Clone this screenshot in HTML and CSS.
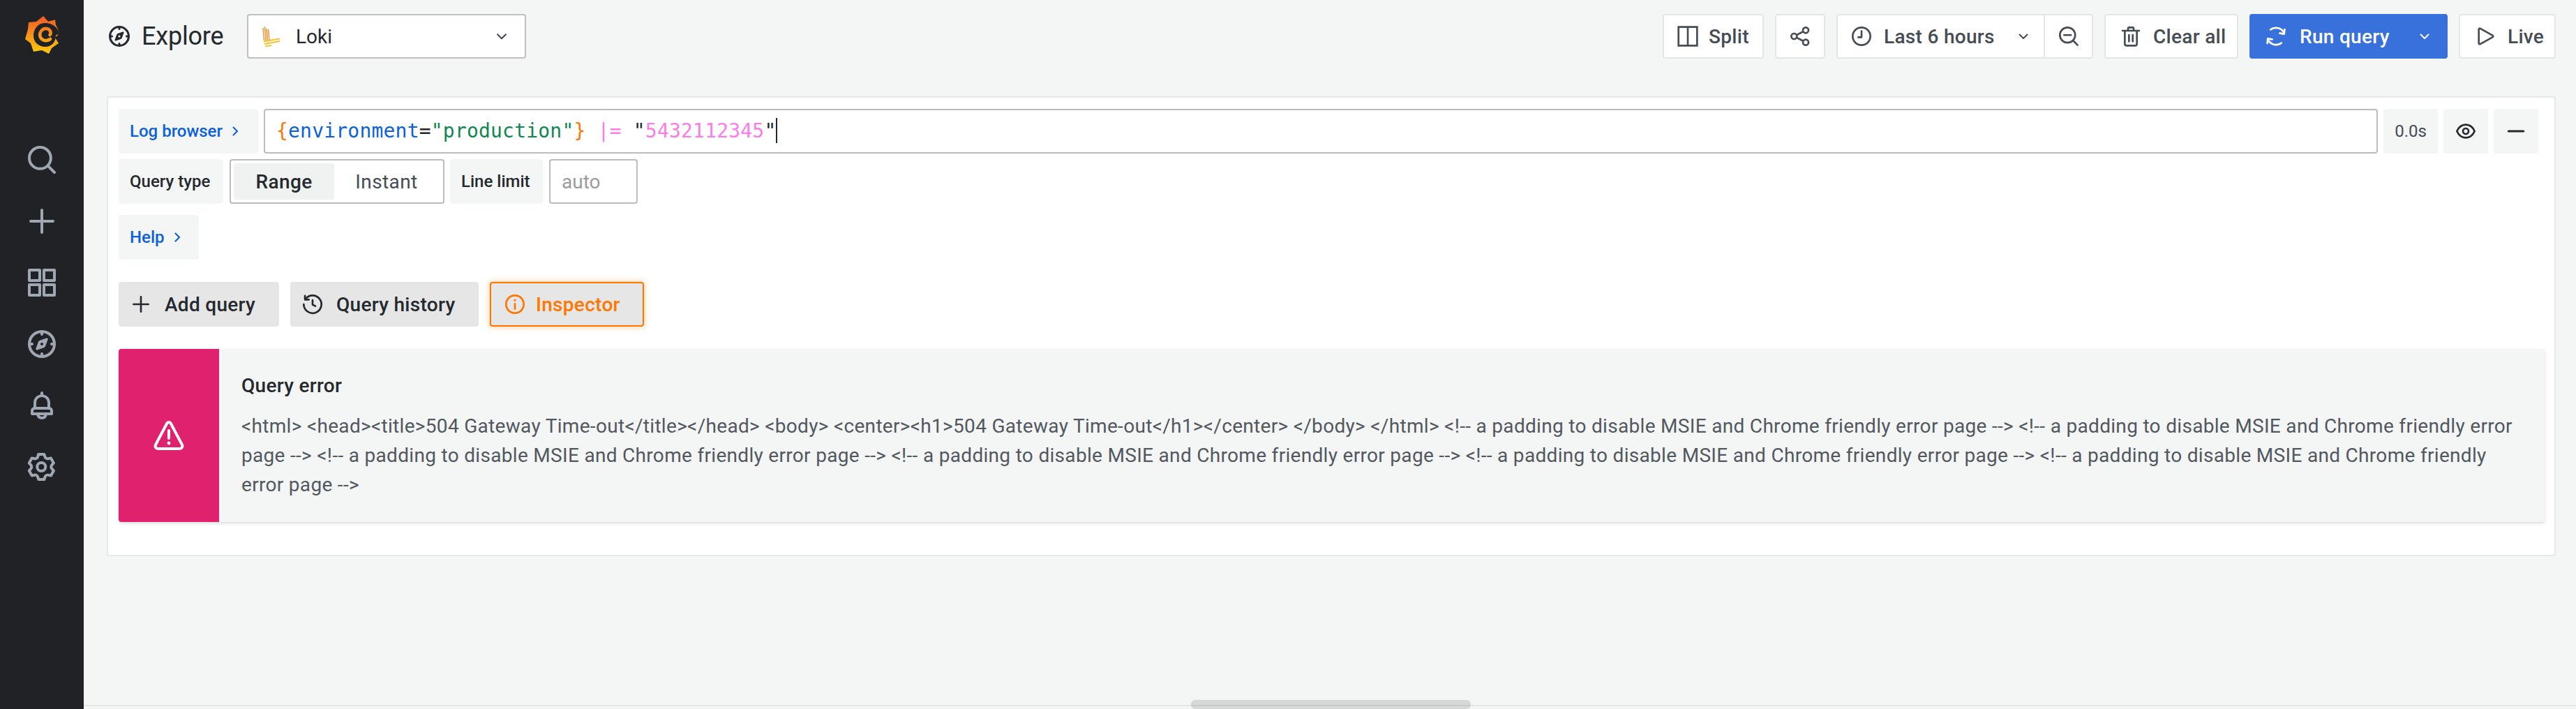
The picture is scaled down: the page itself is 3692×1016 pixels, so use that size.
FILE: index.html
```html
<!DOCTYPE html>
<html lang="en">
<head>
<meta charset="utf-8">
<title>Explore - Grafana</title>
<link rel="stylesheet" href="styles.css">
</head>
<body>
<svg class="defs" aria-hidden="true">
  <defs>
    <linearGradient id="logo-grad" gradientUnits="userSpaceOnUse" x1="0" y1="0" x2="0" y2="54">
      <stop offset="0" stop-color="#f05a28"/>
      <stop offset="1" stop-color="#fbca0a"/>
    </linearGradient>
    <symbol id="i-search" viewBox="0 0 24 24"><circle cx="10.7" cy="10.7" r="7.7" fill="none" stroke="currentColor" stroke-width="2"/><path d="M16.3 16.3 21 21" fill="none" stroke="currentColor" stroke-width="2" stroke-linecap="round"/></symbol>
    <symbol id="i-plus" viewBox="0 0 24 24"><path d="M12 4v16M4 12h16" fill="none" stroke="currentColor" stroke-width="2" stroke-linecap="round"/></symbol>
    <symbol id="i-apps" viewBox="0 0 24 24"><path d="M3 3h7.500v7.500H3zM13.500 3H21v7.500h-7.500zM3 13.500h7.500V21H3zM13.500 13.500H21V21h-7.500z" fill="none" stroke="currentColor" stroke-width="2" stroke-linejoin="round"/></symbol>
    <symbol id="i-compass" viewBox="0 0 24 24"><path fill="currentColor" d="M12,2A10,10,0,1,0,22,12,10,10,0,0,0,12,2Zm1,17.930V19a1,1,0,0,0-2,0v.93A8,8,0,0,1,4.070,13H5a1,1,0,0,0,0-2H4.070A8,8,0,0,1,11,4.070V5a1,1,0,0,0,2,0V4.070A8,8,0,0,1,19.930,11H19a1,1,0,0,0,0,2h.93A8,8,0,0,1,13,19.930Z"/><path fill="currentColor" fill-rule="evenodd" d="M16.100 7.900c-.2-.2-.5-.3-.8-.2l-4.700 1.700c-.6.200-1 .6-1.200 1.200l-1.700 4.700c-.1.300 0 .6.200.8s.5.300.8.200l4.700-1.700c.6-.2 1-.6 1.200-1.200l1.700-4.700c.1-.3 0-.6-.2-.8ZM12 13a1 1 0 1 1 0-2 1 1 0 0 1 0 2Z"/></symbol>
    <symbol id="i-bell" viewBox="0 0 24 24"><path fill="currentColor" d="M18,13.180V10a6,6,0,0,0-5-5.910V3a1,1,0,0,0-2,0V4.090A6,6,0,0,0,6,10v3.180A3,3,0,0,0,4,16v2a1,1,0,0,0,1,1H8.140a4,4,0,0,0,7.720,0H19a1,1,0,0,0,1-1V16A3,3,0,0,0,18,13.180ZM8,10a4,4,0,0,1,8,0v3H8ZM12,20a2,2,0,0,1-1.720-1h3.440A2,2,0,0,1,12,20Zm6-3H6V16a1,1,0,0,1,1-1H17a1,1,0,0,1,1,1Z"/></symbol>
    <symbol id="i-cog" viewBox="0 0 24 24"><path fill="currentColor" d="M19.900 12.660a1 1 0 0 1 0-1.320l1.280-1.440a1 1 0 0 0 .12-1.170l-2-3.460a1 1 0 0 0-1.070-.48l-1.880.38a1 1 0 0 1-1.150-.66l-.61-1.830a1 1 0 0 0-.95-.68h-4a1 1 0 0 0-1 .68l-.56 1.830a1 1 0 0 1-1.150.66L5 4.790a1 1 0 0 0-1 .48L2 8.730a1 1 0 0 0 .1 1.170l1.270 1.440a1 1 0 0 1 0 1.320L2.100 14.100a1 1 0 0 0-.1 1.170l2 3.460a1 1 0 0 0 1.070.48l1.880-.38a1 1 0 0 1 1.150.66l.61 1.830a1 1 0 0 0 1 .68h4a1 1 0 0 0 .95-.68l.61-1.830a1 1 0 0 1 1.150-.66l1.880.38a1 1 0 0 0 1.070-.48l2-3.460a1 1 0 0 0-.12-1.170ZM18.410 14l.8.9-1.280 2.220-1.180-.24a3 3 0 0 0-3.450 2L12.920 20h-2.560L10 18.860a3 3 0 0 0-3.450-2l-1.180.24-1.300-2.210.8-.9a3 3 0 0 0 0-4l-.8-.9 1.280-2.200 1.180.24a3 3 0 0 0 3.450-2L10.360 4h2.560l.38 1.140a3 3 0 0 0 3.450 2l1.180-.24 1.280 2.220-.8.9a3 3 0 0 0 0 3.980Zm-6.770-6a4 4 0 1 0 4 4 4 4 0 0 0-4-4Zm0 6a2 2 0 1 1 2-2 2 2 0 0 1-2 2Z"/></symbol>
    <symbol id="i-down" viewBox="0 0 24 24"><path d="M6.500 9.500 12 15l5.500-5.500" fill="none" stroke="currentColor" stroke-width="2" stroke-linecap="round" stroke-linejoin="round"/></symbol>
    <symbol id="i-right" viewBox="0 0 24 24"><path d="M9.500 6.500 15 12l-5.500 5.500" fill="none" stroke="currentColor" stroke-width="2" stroke-linecap="round" stroke-linejoin="round"/></symbol>
    <symbol id="i-columns" viewBox="0 0 24 24"><path d="M2 2h20v20H2zM12 2v20" fill="none" stroke="currentColor" stroke-width="2"/></symbol>
    <symbol id="i-share" viewBox="0 0 24 24"><circle cx="5.500" cy="12" r="3" fill="none" stroke="currentColor" stroke-width="2"/><circle cx="18" cy="5.500" r="3" fill="none" stroke="currentColor" stroke-width="2"/><circle cx="18" cy="18.500" r="3" fill="none" stroke="currentColor" stroke-width="2"/><path d="M8.200 10.600l7.100-3.700M8.200 13.400l7.100 3.700" fill="none" stroke="currentColor" stroke-width="2"/></symbol>
    <symbol id="i-clock" viewBox="0 0 24 24"><circle cx="12" cy="12" r="9.500" fill="none" stroke="currentColor" stroke-width="2"/><path d="M12 6.500V13H8.500" fill="none" stroke="currentColor" stroke-width="2" stroke-linecap="round" stroke-linejoin="round"/></symbol>
    <symbol id="i-zoomout" viewBox="0 0 24 24"><circle cx="10.700" cy="10.700" r="8.200" fill="none" stroke="currentColor" stroke-width="2"/><path d="M16.700 16.700 21.500 21.500M7 10.700h7.400" fill="none" stroke="currentColor" stroke-width="2" stroke-linecap="round"/></symbol>
    <symbol id="i-trash" viewBox="0 0 24 24"><path d="M3 6h18M9 6V3.500a1 1 0 0 1 1-1h4a1 1 0 0 1 1 1V6M5.500 6v14a2 2 0 0 0 2 2h9a2 2 0 0 0 2-2V6M10 10.500v7M14 10.500v7" fill="none" stroke="currentColor" stroke-width="2" stroke-linecap="round" stroke-linejoin="round"/></symbol>
    <symbol id="i-sync" viewBox="0 0 24 24"><path d="M6.200 4.800A9.500 9.500 0 0 1 20.800 9M17.800 19.200A9.500 9.500 0 0 1 3.200 15" fill="none" stroke="currentColor" stroke-width="2" stroke-linecap="round"/><path d="M21.300 4.500 20.800 9.500 16 8.700M2.700 19.500 3.200 14.500 8 15.300" fill="none" stroke="currentColor" stroke-width="2" stroke-linecap="round" stroke-linejoin="round"/></symbol>
    <symbol id="i-play" viewBox="0 0 24 24"><path d="M6.500 3.600 20 11.200a1 1 0 0 1 0 1.700L6.500 20.400A1 1 0 0 1 5 19.500v-15a1 1 0 0 1 1.500-.9Z" fill="none" stroke="currentColor" stroke-width="2" stroke-linejoin="round"/></symbol>
    <symbol id="i-eye" viewBox="0 0 24 24"><path d="M2.500 12C4.500 7.500 8 5 12 5s7.500 2.500 9.500 7c-2 4.500-5.500 7-9.500 7s-7.500-2.500-9.500-7Z" fill="none" stroke="currentColor" stroke-width="2" stroke-linejoin="round"/><circle cx="12" cy="12" r="3" fill="none" stroke="currentColor" stroke-width="2"/></symbol>
    <symbol id="i-minus" viewBox="0 0 24 24"><path d="M4 12h16" fill="none" stroke="currentColor" stroke-width="2.400" stroke-linecap="round"/></symbol>
    <symbol id="i-history" viewBox="0 0 24 24"><path d="M4.300 6.500A9.500 9.500 0 1 1 2.500 12" fill="none" stroke="currentColor" stroke-width="2" stroke-linecap="round"/><path d="M3.800 2.800v4.200H8M12 7.500V12.500l3 1.500" fill="none" stroke="currentColor" stroke-width="2" stroke-linecap="round" stroke-linejoin="round"/></symbol>
    <symbol id="i-info" viewBox="0 0 24 24"><circle cx="12" cy="12" r="9.500" fill="none" stroke="currentColor" stroke-width="2"/><path d="M12 11.500v5.500" fill="none" stroke="currentColor" stroke-width="2" stroke-linecap="round"/><circle cx="12" cy="7.700" r="1.200" fill="currentColor"/></symbol>
    <symbol id="i-warn" viewBox="0 0 24 24"><path d="M12 2.500c.6 0 1.100.3 1.400.9l8.100 15.300c.6 1.300-.2 2.800-1.700 2.800H4.200c-1.500 0-2.300-1.500-1.700-2.800l8.100-15.300c.3-.6.800-.9 1.400-.9Z" fill="none" stroke="currentColor" stroke-width="2" stroke-linejoin="round"/><path d="M12 8.500v5.500" fill="none" stroke="currentColor" stroke-width="2" stroke-linecap="round"/><circle cx="12" cy="17.500" r="1.200" fill="currentColor"/></symbol>
  </defs>
</svg>

<div class="app">
  <nav class="sidemenu">
    <a class="logo" href="#" aria-label="Home">
      <svg class="logo-svg" viewBox="0 0 50 54">
        <path fill="url(#logo-grad)" d="M26 0 33 7.700 43 5.300 44 12.700Q47.500 18 49 25L43 31 48 39 38 46 34 54 24 49 12 51 8 39 0 33 4 19 5 9 16 8Z"/>
        <path fill="#202226" d="M49.500 26C47 14 36 9 27 10 17 11 12 20 12 28 12 38 20 44 29 44 38 44 44 37 44 28 44 27 47 26 49.500 26Z"/>
        <path fill="none" stroke="url(#logo-grad)" stroke-width="4.600" stroke-linecap="round" d="M36 33C30 37 23 35 21.500 29 20 22 26 17 31 18 36 19 38 24 35.500 27"/>
      </svg>
    </a>
    <div class="nav-icons">
      <a class="nav-item" href="#" aria-label="Search"><svg class="nav-ic"><use href="#i-search"/></svg></a>
      <a class="nav-item" href="#" aria-label="Create"><svg class="nav-ic"><use href="#i-plus"/></svg></a>
      <a class="nav-item" href="#" aria-label="Dashboards"><svg class="nav-ic"><use href="#i-apps"/></svg></a>
      <a class="nav-item" href="#" aria-label="Explore"><svg class="nav-ic"><use href="#i-compass"/></svg></a>
      <a class="nav-item" href="#" aria-label="Alerting"><svg class="nav-ic"><use href="#i-bell"/></svg></a>
      <a class="nav-item" href="#" aria-label="Configuration"><svg class="nav-ic"><use href="#i-cog"/></svg></a>
    </div>
  </nav>

  <main class="main">
    <header class="toolbar">
      <div class="title">
        <svg class="title-ic"><use href="#i-compass"/></svg>
        <span>Explore</span>
      </div>
      <button class="picker">
        <svg class="loki" viewBox="0 0 26 30">
          <path d="M2 3l1.500 18M4.500 1l1.500 20M7 4l1.500 17M9.500 5l1.500 17" fill="none" stroke="#ee9b3f" stroke-width="1.600"/>
          <path d="M3 22.500 26 18.500M4 26 26 22M5 29.500 14 28" fill="none" stroke="#fac22a" stroke-width="2.200"/>
        </svg>
        <span class="picker-text">Loki</span>
        <svg class="chev picker-chev"><use href="#i-down"/></svg>
      </button>
      <div class="actions">
        <button class="tb-btn btn-split"><svg class="ic"><use href="#i-columns"/></svg>Split</button>
        <button class="tb-btn btn-share" aria-label="Share"><svg class="ic"><use href="#i-share"/></svg></button>
        <div class="tb-group">
          <button class="tb-btn btn-time"><svg class="ic"><use href="#i-clock"/></svg>Last 6 hours<svg class="chev-sm time-chev"><use href="#i-down"/></svg></button>
          <button class="tb-btn btn-zoom" aria-label="Zoom out"><svg class="ic"><use href="#i-zoomout"/></svg></button>
        </div>
        <button class="tb-btn btn-clear"><svg class="ic"><use href="#i-trash"/></svg>Clear all</button>
        <button class="tb-btn btn-run"><svg class="ic"><use href="#i-sync"/></svg>Run query<svg class="chev-sm run-chev"><use href="#i-down"/></svg></button>
        <button class="tb-btn btn-live"><svg class="ic"><use href="#i-play"/></svg>Live</button>
      </div>
    </header>

    <section class="panel">
      <div class="row row-query">
        <button class="label label-link lb-browser">Log browser<svg class="chev-label"><use href="#i-right"/></svg></button>
        <div class="editor"><span class="t-brace">{</span><span class="t-key">environment</span><span class="t-op">=</span><span class="t-str">"production"</span><span class="t-brace">}</span> <span class="t-pipe">|=</span> <span class="t-q">"</span><span class="t-num">5432112345</span><span class="t-q">"</span><span class="caret"></span></div>
        <div class="label label-time">0.0s</div>
        <button class="label label-icon" aria-label="Hide query"><svg class="eye"><use href="#i-eye"/></svg></button>
        <button class="label label-icon" aria-label="Remove query"><svg class="eye"><use href="#i-minus"/></svg></button>
      </div>
      <div class="row row-options">
        <div class="label label-strong lb-type">Query type</div>
        <div class="radio">
          <span class="radio-opt radio-on">Range</span>
          <span class="radio-opt">Instant</span>
        </div>
        <div class="label label-strong lb-limit">Line limit</div>
        <div class="limit-input">auto</div>
      </div>
      <div class="row row-help">
        <button class="label label-link lb-help">Help<svg class="chev-label"><use href="#i-right"/></svg></button>
      </div>
      <div class="row row-buttons">
        <button class="act act-add"><svg class="ic"><use href="#i-plus"/></svg>Add query</button>
        <button class="act act-history"><svg class="ic"><use href="#i-history"/></svg>Query history</button>
        <button class="act act-inspector"><svg class="ic"><use href="#i-info"/></svg>Inspector</button>
      </div>
      <div class="alert">
        <div class="alert-icon"><svg class="warn"><use href="#i-warn"/></svg></div>
        <div class="alert-body">
          <div class="alert-title">Query error</div>
          <div class="alert-text">&lt;html&gt; &lt;head&gt;&lt;title&gt;504 Gateway Time-out&lt;/title&gt;&lt;/head&gt; &lt;body&gt; &lt;center&gt;&lt;h1&gt;504 Gateway Time-out&lt;/h1&gt;&lt;/center&gt; &lt;/body&gt; &lt;/html&gt; &lt;!-- a padding to disable MSIE and Chrome friendly error page --&gt; &lt;!-- a padding to disable MSIE and Chrome friendly error page --&gt; &lt;!-- a padding to disable MSIE and Chrome friendly error page --&gt; &lt;!-- a padding to disable MSIE and Chrome friendly error page --&gt; &lt;!-- a padding to disable MSIE and Chrome friendly error page --&gt; &lt;!-- a padding to disable MSIE and Chrome friendly error page --&gt;</div>
        </div>
      </div>
    </section>

    <div class="scrollbar"><div class="scroll-thumb"></div></div>
  </main>
</div>
</body>
</html>
```

FILE: styles.css
```css
* { box-sizing: border-box; }
html, body { margin: 0; height: 100%; overflow: hidden; }
body {
  font-family: Roboto, "Liberation Sans", sans-serif;
  font-size: 28px;
  color: #24292e;
  background: #f4f5f5;
}
button { font: inherit; color: inherit; cursor: pointer; }
.defs { position: absolute; width: 0; height: 0; }

.app { display: flex; height: 1016px; }

/* side menu */
.sidemenu { width: 120px; flex: none; background: #202226; display: flex; flex-direction: column; align-items: center; }
.logo { display: block; margin-top: 23px; height: 54px; width: 50px; margin-left: 2px; }
.logo-svg { display: block; width: 50px; height: 54px; }
.nav-icons { margin-top: 108px; display: flex; flex-direction: column; }
.nav-item { display: flex; align-items: center; justify-content: center; width: 120px; height: 88px; color: #9fa7b3; }
.nav-ic { width: 48px; height: 48px; }

/* main */
.main { flex: 1; min-width: 0; padding: 20px 29px 0 33px; position: relative; }
.toolbar { display: flex; align-items: center; height: 64px; }
.title { display: flex; align-items: center; gap: 14px; font-size: 36px; width: 201px; letter-spacing: -.2px; }
.title-ic { width: 36px; height: 36px; flex: none; }
.picker {
  display: flex; align-items: center; width: 400px; height: 64px; margin-left: 0;
  background: #fff; border: 2px solid #c0c0c0; border-radius: 4px; padding: 0 20px 0 19px; text-align: left;
}
.loki { width: 26px; height: 30px; flex: none; }
.picker-text { margin-left: 23px; flex: 1; }
.chev { width: 26px; height: 26px; color: #464c54; }
.actions { margin-left: auto; display: flex; gap: 16px; }

.ic { width: 32px; height: 32px; flex: none; }
.chev-sm { width: 24px; height: 24px; flex: none; }
.tb-btn {
  display: flex; align-items: center; height: 64px; background: #fff;
  border: 2px solid #e4e7e7; border-radius: 4px; color: #464c54; font-weight: 500; padding: 0; letter-spacing: .3px;
}
.btn-split { width: 145px; padding-left: 18px; gap: 14px; }
.btn-share { width: 72px; justify-content: center; }
.tb-group { display: flex; }
.btn-time { width: 298px; padding-left: 18px; gap: 16px; border-radius: 4px 0 0 4px; border-right-width: 1px; }
.time-chev { margin-left: 13px; }
.btn-zoom { width: 70px; justify-content: center; border-radius: 0 4px 4px 0; border-left-width: 1px; }
.btn-clear { width: 192px; padding-left: 20px; gap: 16px; }
.btn-run { width: 284px; padding-left: 20px; gap: 18px; background: #3871dc; border-color: #3871dc; color: #fff; }
.run-chev { margin-left: 20px; }
.btn-live { width: 139px; padding-left: 20px; gap: 16px; }

/* panel */
.panel {
  margin-top: 54px; height: 659px; background: #fff; border: 2px solid #e6e9e9; border-radius: 4px;
  padding: 16px 14px 0 15px;
}
.row { display: flex; gap: 8px; }
.row-query { padding-right: 9px; }
.row-help { margin-top: 16px; }
.row-options { margin-top: 8px; }
.row-buttons { margin-top: 32px; gap: 16px; }
.label {
  display: flex; align-items: center; height: 64px; background: #f4f5f5; border: 0; border-radius: 4px;
  font-size: 24px; font-weight: 500; padding: 0 16px; flex: none;
}
.label-link { color: #0b61dc; }
.chev-label { width: 24px; height: 24px; margin-left: 6px; }
.lb-browser { width: 200px; }
.lb-help { width: 115px; }
.lb-type { width: 150px; }
.lb-limit { width: 133px; }
.label-time { width: 78px; color: #464c54; font-weight: 400; justify-content: center; padding: 0; }
.label-icon { width: 64px; justify-content: center; padding: 0; }
.eye { width: 32px; height: 32px; }
.editor {
  flex: 1; min-width: 0; height: 64px; border: 2px solid #bdbdbd; border-radius: 4px;
  font-family: "DejaVu Sans Mono", "Liberation Mono", monospace; font-size: 28px; line-height: 60px;
  padding-left: 16px; white-space: pre; color: #24292e; letter-spacing: .2px;
}
.t-brace { color: #ff7700; }
.t-key { color: #0b61dc; }
.t-op { color: #24292e; }
.t-str { color: #118650; }
.t-pipe { color: #fb7de6; }
.t-q { color: #24292e; }
.t-num { color: #fb7de6; }
.caret { display: inline-block; width: 2px; height: 36px; background: #24292e; vertical-align: -8px; }
.radio {
  display: flex; align-items: center; width: 308px; height: 64px; margin-left: 1px; border: 2px solid #bdbdbd; border-radius: 4px; padding: 0 4px;
}
.radio-opt { display: flex; align-items: center; justify-content: center; width: 144px; height: 52px; border-radius: 4px; color: #464c54; font-weight: 400; letter-spacing: .4px; padding-left: 6px; }
.radio-on { background: #f0f1f1; color: #24292e; font-weight: 500; padding-left: 0; }
.limit-input {
  width: 127px; height: 64px; border: 2px solid #bdbdbd; border-radius: 4px; color: #9b9b9b;
  display: flex; align-items: center; padding-left: 16px; font-size: 28px; margin-left: 1px;
}
.act {
  display: flex; align-items: center; height: 64px; background: #e6e6e6; border: 0; border-radius: 4px;
  font-weight: 500; padding: 0; color: #24292e; letter-spacing: .3px;
}
.act-add { width: 230px; padding-left: 16px; gap: 18px; }
.act-history { width: 270px; padding-left: 16px; gap: 18px; }
.act-inspector { width: 221px; padding-left: 18px; gap: 14px; color: #ff7700; border: 2px solid #ff7700; box-shadow: 0 0 8px rgba(255, 119, 0, .45); }

/* alert */
.alert { display: flex; margin-top: 32px; min-height: 248px; background: #f4f5f5; border-radius: 4px; box-shadow: 0 2px 4px rgba(0, 0, 0, .15); }
.alert-icon { width: 144px; flex: none; display: flex; align-items: center; justify-content: center; background: #e0226e; border-radius: 4px 0 0 4px; color: #fff; }
.warn { width: 48px; height: 48px; }
.alert-body { flex: 1; min-width: 0; padding: 32px; line-height: 42px; }
.alert-title { font-weight: 500; margin-bottom: 16px; letter-spacing: .3px; }
.alert-text { color: #52585f; letter-spacing: .31px; }

/* scrollbar */
.scrollbar { position: absolute; left: 0; right: 0; bottom: 4px; height: 2px; background: #e4e6e6; }
.scroll-thumb { position: absolute; left: 1587px; width: 401px; top: -7px; height: 13px; background: rgba(0, 0, 0, .12); border-radius: 6px; }
```
